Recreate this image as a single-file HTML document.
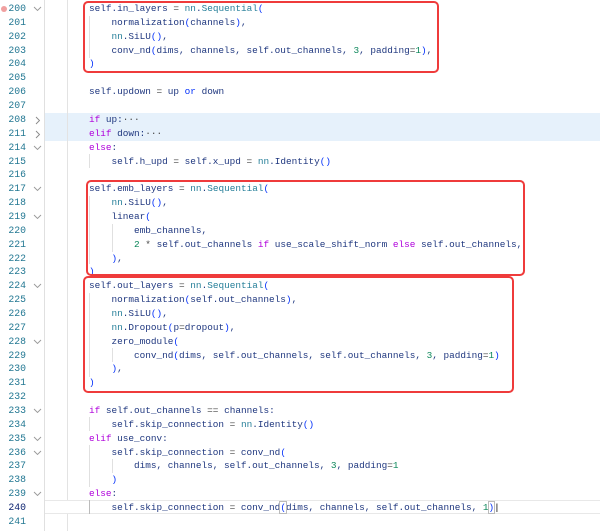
<!DOCTYPE html>
<html><head><meta charset="utf-8"><style>
*{margin:0;padding:0;box-sizing:border-box}
body{width:600px;height:531px;background:#fff;position:relative;overflow:hidden;font-family:"Liberation Mono","DejaVu Sans Mono",monospace;font-size:9.4px}
.r{position:absolute;left:0;width:600px;height:13.86px;line-height:13.86px;white-space:pre}
.n{position:absolute;left:0;width:26px;text-align:right;color:#237893;font-size:9.8px}
.f{position:absolute;left:33px;top:4px;width:9px;height:6px}
.f2{position:absolute;left:35px;top:3px;width:6px;height:9px}
.c{position:absolute;left:89px;color:#1f377f}
.k{color:#af00db}.t{color:#267f99}.p{color:#0431fa}.d{color:#098658}.o{color:#444}.g{color:#000}
.box{position:absolute;border:2.5px solid #ef3b3b;border-radius:5px}
.hl{position:absolute;left:45px;width:555px;height:13.86px;background:#e6f1fb}
.vl{position:absolute;background:#e0e0e0;width:1px}
</style></head><body>
<svg width="0" height="0" style="position:absolute"><defs>
<symbol id="dn" viewBox="0 0 9 6"><path d="M1 1 L4.5 4.5 L8 1" fill="none" stroke="#999" stroke-width="0.9"/></symbol>
<symbol id="rt" viewBox="0 0 6 9"><path d="M1 1 L4.5 4.5 L1 8" fill="none" stroke="#888" stroke-width="0.9"/></symbol>
</defs></svg>
<div class="vl" style="left:44px;top:0;height:531px"></div>
<div class="hl" style="top:113px"></div>
<div class="hl" style="top:127px"></div>
<div style="position:absolute;left:45px;width:555px;top:500px;height:14px;border-top:1px solid #e8e8e8;border-bottom:1px solid #e8e8e8"></div>
<div class="vl" style="left:67px;top:0;height:500px;background:#e3e3e3"></div>
<div class="vl" style="left:67px;top:514px;height:17px;background:#e3e3e3"></div>
<div class="vl" style="left:89px;top:16px;height:42px"></div>
<div class="vl" style="left:89px;top:154px;height:14px"></div>
<div class="vl" style="left:89px;top:196px;height:68px"></div>
<div class="vl" style="left:112px;top:224px;height:28px"></div>
<div class="vl" style="left:89px;top:293px;height:84px"></div>
<div class="vl" style="left:112px;top:348px;height:14px"></div>
<div class="vl" style="left:89px;top:417px;height:14px"></div>
<div class="vl" style="left:89px;top:445px;height:42px"></div>
<div class="vl" style="left:112px;top:459px;height:14px"></div>
<div class="vl" style="left:89px;top:500px;height:14px;background:#bbb"></div>
<div style="position:absolute;left:1px;top:6px;width:6px;height:6px;border-radius:50%;background:#f0a0a0"></div>

<div class="r" style="top:2px"><span class="n">200</span><svg class="f"><use href="#dn"/></svg><span class="c">self.in_layers <span class="o">=</span> <span class="t">nn</span>.<span class="t">Sequential</span><span class="p">(</span></span></div>
<div class="r" style="top:15.9px"><span class="n">201</span><span class="c">    normalization<span class="p">(</span>channels<span class="p">)</span>,</span></div>
<div class="r" style="top:29.7px"><span class="n">202</span><span class="c">    <span class="t">nn</span>.SiLU<span class="p">()</span>,</span></div>
<div class="r" style="top:43.6px"><span class="n">203</span><span class="c">    conv_nd<span class="p">(</span>dims, channels, self.out_channels, <span class="d">3</span>, padding<span class="o">=</span><span class="d">1</span><span class="p">)</span>,</span></div>
<div class="r" style="top:57.4px"><span class="n">204</span><span class="c"><span class="p">)</span></span></div>
<div class="r" style="top:71.3px"><span class="n">205</span></div>
<div class="r" style="top:85.2px"><span class="n">206</span><span class="c">self.updown <span class="o">=</span> up <span class="p">or</span> down</span></div>
<div class="r" style="top:99px"><span class="n">207</span></div>
<div class="r" style="top:112.9px"><span class="n">208</span><svg class="f2"><use href="#rt"/></svg><span class="c"><span class="k">if</span> up:<span class="o">···</span></span></div>
<div class="r" style="top:126.7px"><span class="n">211</span><svg class="f2"><use href="#rt"/></svg><span class="c"><span class="k">elif</span> down:<span class="o">···</span></span></div>
<div class="r" style="top:140.6px"><span class="n">214</span><svg class="f"><use href="#dn"/></svg><span class="c"><span class="k">else</span>:</span></div>
<div class="r" style="top:154.5px"><span class="n">215</span><span class="c">    self.h_upd <span class="o">=</span> self.x_upd <span class="o">=</span> <span class="t">nn</span>.Identity<span class="p">()</span></span></div>
<div class="r" style="top:168.3px"><span class="n">216</span></div>
<div class="r" style="top:182.2px"><span class="n">217</span><svg class="f"><use href="#dn"/></svg><span class="c">self.emb_layers <span class="o">=</span> <span class="t">nn</span>.<span class="t">Sequential</span><span class="p">(</span></span></div>
<div class="r" style="top:196px"><span class="n">218</span><span class="c">    <span class="t">nn</span>.SiLU<span class="p">()</span>,</span></div>
<div class="r" style="top:209.9px"><span class="n">219</span><svg class="f"><use href="#dn"/></svg><span class="c">    linear<span class="p">(</span></span></div>
<div class="r" style="top:223.8px"><span class="n">220</span><span class="c">        emb_channels,</span></div>
<div class="r" style="top:237.6px"><span class="n">221</span><span class="c">        <span class="d">2</span> <span class="o">*</span> self.out_channels <span class="k">if</span> use_scale_shift_norm <span class="k">else</span> self.out_channels,</span></div>
<div class="r" style="top:251.5px"><span class="n">222</span><span class="c">    <span class="p">)</span>,</span></div>
<div class="r" style="top:265.3px"><span class="n">223</span><span class="c"><span class="p">)</span></span></div>
<div class="r" style="top:279.2px"><span class="n">224</span><svg class="f"><use href="#dn"/></svg><span class="c">self.out_layers <span class="o">=</span> <span class="t">nn</span>.<span class="t">Sequential</span><span class="p">(</span></span></div>
<div class="r" style="top:293.1px"><span class="n">225</span><span class="c">    normalization<span class="p">(</span>self.out_channels<span class="p">)</span>,</span></div>
<div class="r" style="top:306.9px"><span class="n">226</span><span class="c">    <span class="t">nn</span>.SiLU<span class="p">()</span>,</span></div>
<div class="r" style="top:320.8px"><span class="n">227</span><span class="c">    <span class="t">nn</span>.Dropout<span class="p">(</span>p<span class="o">=</span>dropout<span class="p">)</span>,</span></div>
<div class="r" style="top:334.6px"><span class="n">228</span><svg class="f"><use href="#dn"/></svg><span class="c">    zero_module<span class="p">(</span></span></div>
<div class="r" style="top:348.5px"><span class="n">229</span><span class="c">        conv_nd<span class="p">(</span>dims, self.out_channels, self.out_channels, <span class="d">3</span>, padding<span class="o">=</span><span class="d">1</span><span class="p">)</span></span></div>
<div class="r" style="top:362.4px"><span class="n">230</span><span class="c">    <span class="p">)</span>,</span></div>
<div class="r" style="top:376.2px"><span class="n">231</span><span class="c"><span class="p">)</span></span></div>
<div class="r" style="top:390.1px"><span class="n">232</span></div>
<div class="r" style="top:403.9px"><span class="n">233</span><svg class="f"><use href="#dn"/></svg><span class="c"><span class="k">if</span> self.out_channels <span class="o">==</span> channels:</span></div>
<div class="r" style="top:417.8px"><span class="n">234</span><span class="c">    self.skip_connection <span class="o">=</span> <span class="t">nn</span>.Identity<span class="p">()</span></span></div>
<div class="r" style="top:431.7px"><span class="n">235</span><svg class="f"><use href="#dn"/></svg><span class="c"><span class="k">elif</span> use_conv:</span></div>
<div class="r" style="top:445.5px"><span class="n">236</span><svg class="f"><use href="#dn"/></svg><span class="c">    self.skip_connection <span class="o">=</span> conv_nd<span class="p">(</span></span></div>
<div class="r" style="top:459.4px"><span class="n">237</span><span class="c">        dims, channels, self.out_channels, <span class="d">3</span>, padding<span class="o">=</span><span class="d">1</span></span></div>
<div class="r" style="top:473.2px"><span class="n">238</span><span class="c">    <span class="p">)</span></span></div>
<div class="r" style="top:487.1px"><span class="n">239</span><svg class="f"><use href="#dn"/></svg><span class="c"><span class="k">else</span>:</span></div>
<div class="r" style="top:501px"><span class="n" style="color:#0b216f">240</span><span class="c">    self.skip_connection <span class="o">=</span> conv_nd<span class="p" style="outline:1px solid #bbb">(</span>dims, channels, self.out_channels, <span class="d">1</span><span class="p" style="outline:1px solid #bbb">)</span><span class="g">|</span></span></div>
<div class="r" style="top:514.8px"><span class="n">241</span></div>

<div class="box" style="left:83px;top:1px;width:356px;height:72px"></div>
<div class="box" style="left:86px;top:180px;width:439px;height:96px"></div>
<div class="box" style="left:83px;top:276px;width:431px;height:117px"></div>
</body></html>
